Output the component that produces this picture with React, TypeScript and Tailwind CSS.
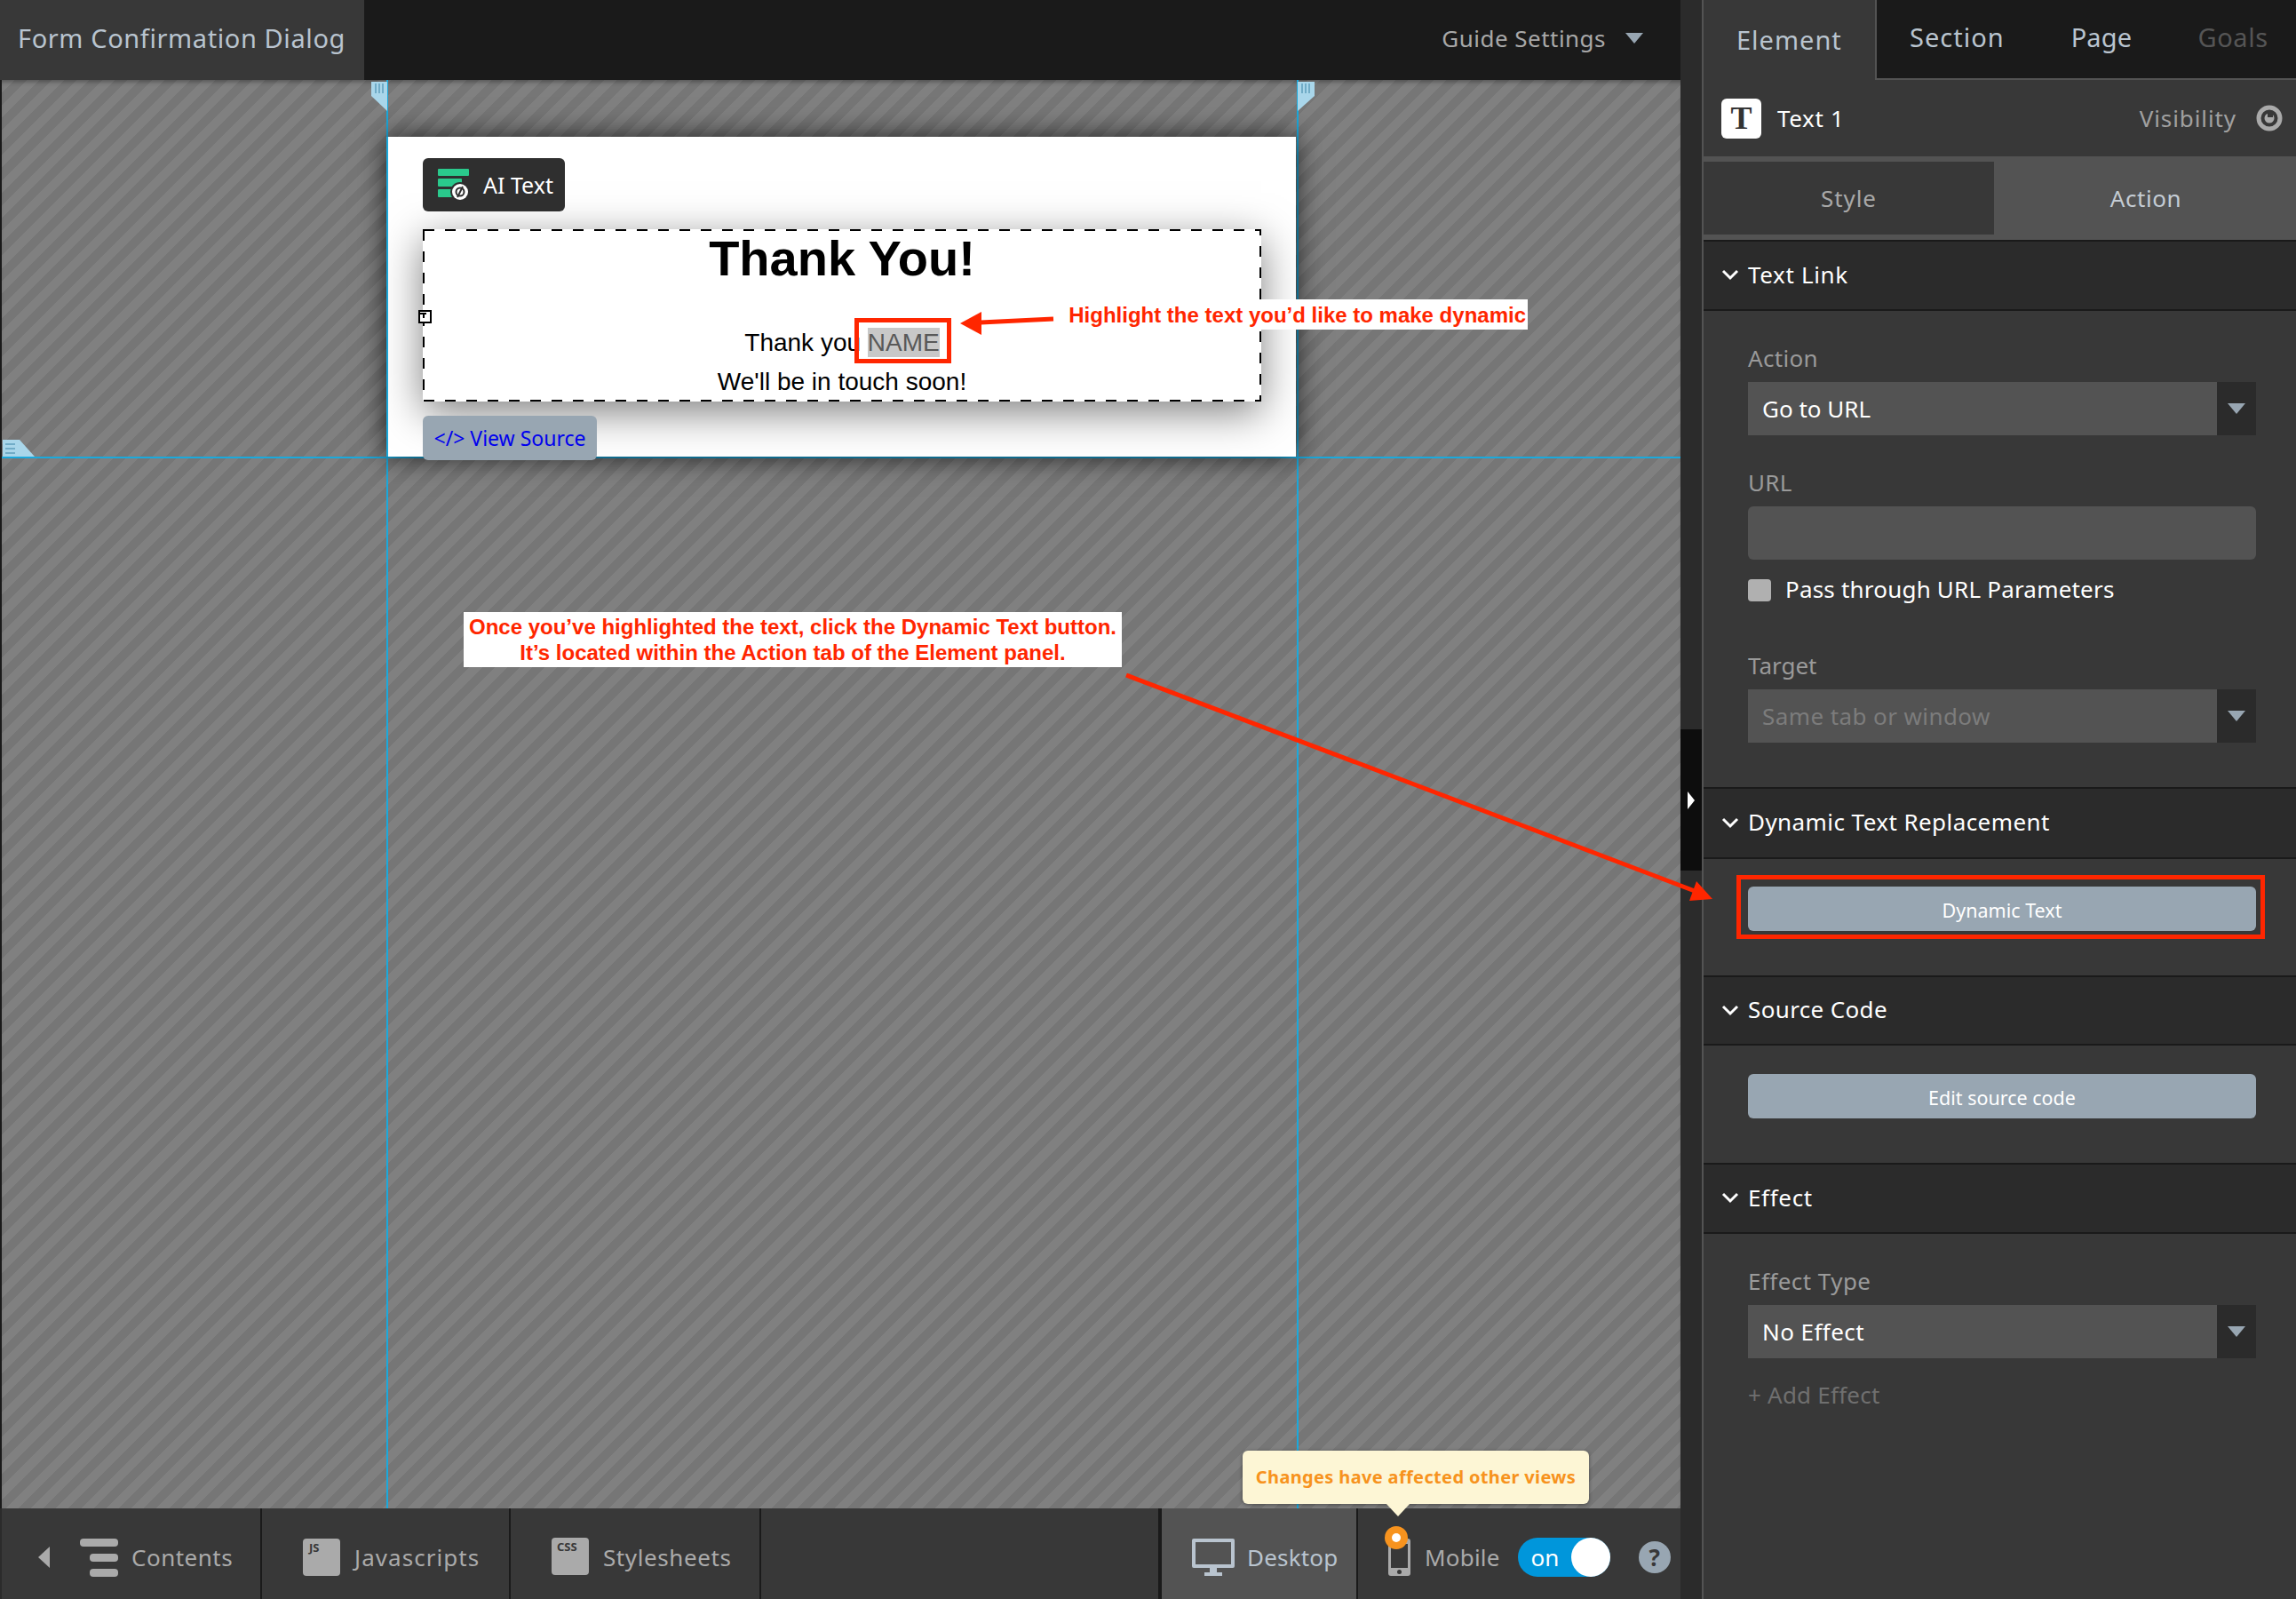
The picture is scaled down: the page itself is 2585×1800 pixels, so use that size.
const sans = "font-['Noto_Sans','Lato',sans-serif]"
const arial = "font-['Liberation_Sans',Arial,sans-serif]"

function Caret({ className = "" }: { className?: string }) {
  return (
    <svg width="20" height="12" viewBox="0 0 20 12" className={className}>
      <path d="M0 0h20L10 12z" fill="#98a6b2" />
    </svg>
  )
}

function Chevron() {
  return (
    <svg width="20" height="14" viewBox="0 0 20 14" className="shrink-0">
      <path d="M2 3l8 8 8-8" fill="none" stroke="#fff" strokeWidth="3" />
    </svg>
  )
}

function Select({ value, dim, tracking = "", className = "" }: { value: string; dim?: boolean; tracking?: string; className?: string }) {
  return (
    <div className={`flex h-[60px] w-[572px] ${className}`}>
      <div className={`flex-1 bg-[#535353] pl-4 flex items-center text-[26px] ${dim ? "text-[#7c7c7c]" : "text-white"} ${tracking}`}>
        {value}
      </div>
      <div className="w-11 bg-[#2b2b2b] flex items-center justify-center">
        <Caret />
      </div>
    </div>
  )
}

function SectionHeader({ title, tracking = "", h = "h-[74px]" }: { title: string; tracking?: string; h?: string }) {
  return (
    <div className={`${h} bg-[#2b2b2b] border-y-2 border-[#1a1a1a] box-content flex items-center pl-[20px] pb-[2px] gap-[10px] text-white text-[26px] ${tracking}`}>
      <Chevron />
      {title}
    </div>
  )
}

function Label({ children, className = "" }: { children: string; className?: string }) {
  return <div className={`text-[26px] leading-[30px] text-[#9a9a9a] ${className}`}>{children}</div>
}

function PanelButton({ children, className = "" }: { children: string; className?: string }) {
  return (
    <div className={`h-[50px] w-[572px] pt-[5px] rounded-md bg-[#98a6b2] flex items-center justify-center text-white text-[21.5px] ${className}`}>
      {children}
    </div>
  )
}

function ElementPanel() {
  return (
    <aside className="flex-1 border-l-2 border-[#535353] bg-[#383838] flex flex-col">
      {/* Tabs */}
      <div className="h-[90px] flex bg-[#1a1a1a] text-[29px]">
        <div className="w-[195px] bg-[#383838] border-r-2 border-[#535353] pl-[37px] pt-[23px] text-[#b9c4cf] tracking-[1px]">Element</div>
        <div className="flex-1 border-b-2 border-[#535353] flex pt-[20px] items-start">
          <span className="ml-[37px] text-[#b9c4cf] tracking-[1px]">Section</span>
          <span className="ml-[75px] text-[#b9c4cf] tracking-[0.2px]">Page</span>
          <span className="ml-[74px] text-[#555] tracking-[0.6px]">Goals</span>
        </div>
      </div>

      {/* Current element */}
      <div className="h-[86px] flex items-center pl-5 pr-[15px]">
        <div className="w-[45px] h-[45px] rounded-md bg-white flex items-center justify-center text-[#333] text-[36px] font-bold font-['Liberation_Serif',serif] leading-none">T</div>
        <span className="ml-[18px] text-white text-[26px] tracking-[0.66px]">Text 1</span>
        <span className="ml-auto text-[#a0a0a0] text-[26px] tracking-[0.9px]">Visibility</span>
        <svg width="30" height="30" viewBox="0 0 30 30" className="ml-[22px]">
          <circle cx="15" cy="15" r="12" fill="none" stroke="#aaa" strokeWidth="5" />
          <circle cx="15" cy="15" r="5.5" fill="#aaa" />
          <path d="M13 8h6v6h-6z" fill="#383838" />
        </svg>
      </div>

      {/* Style / Action */}
      <div className="h-[94px] bg-[#535353] pt-[6px] flex text-[26px]">
        <div className="w-[327px] h-[82px] pt-[1px] bg-[#383838] text-[#a8a8a8] flex items-center justify-center tracking-[0.9px]">Style</div>
        <div className="flex-1 h-[82px] pt-[1px] pl-[2px] text-[#c4ccd4] flex items-center justify-center tracking-[0.6px]">Action</div>
      </div>

      <SectionHeader title="Text Link" tracking="tracking-[0.64px]" />

      <div className="h-[536px] pl-[50px] pt-[38px]">
        <Label className="tracking-[0.33px]">Action</Label>
        <Select value="Go to URL" className="mt-[12px]" />
        <Label className="mt-[38px] tracking-[0.3px]">URL</Label>
        <div className="mt-[12px] h-[60px] w-[572px] rounded-md bg-[#535353]" />
        <div className="mt-[21px] h-[26px] flex items-center">
          <div className="w-[26px] h-[25px] rounded bg-[#b0b0b0]" />
          <span className="ml-4 -mt-[2px] text-white text-[26px] tracking-[0.2px]">Pass through URL Parameters</span>
        </div>
        <Label className="mt-[57px]">Target</Label>
        <Select value="Same tab or window" dim tracking="tracking-[0.41px]" className="mt-[12px]" />
      </div>

      <SectionHeader title="Dynamic Text Replacement" tracking="tracking-[0.43px]" h="h-[75px]" />

      <div className="h-[131px] pl-[50px] pt-[31px] relative">
        <PanelButton>Dynamic Text</PanelButton>
        {/* annotation around the button */}
        <div className="absolute left-[37px] top-[18px] w-[595px] h-[72px] border-[5px] border-[#ff2600]" />
      </div>

      <SectionHeader title="Source Code" tracking="tracking-[0.36px]" h="h-[73px]" />

      <div className="h-[132px] pl-[50px] pt-[32px]">
        <PanelButton>Edit source code</PanelButton>
      </div>

      <SectionHeader title="Effect" tracking="tracking-[0.66px]" h="h-[74px]" />

      <div className="flex-1 pl-[50px] pt-[38px]">
        <Label className="tracking-[0.45px]">Effect Type</Label>
        <Select value="No Effect" tracking="tracking-[0.44px]" className="mt-[12px]" />
        <div className="mt-[22px] text-[26px] text-[#6f6f6f] tracking-[0.22px]">+ Add Effect</div>
      </div>
    </aside>
  )
}

function AiIcon() {
  return (
    <svg width="36" height="36" viewBox="0 0 36 36">
      <rect x="0" y="0" width="35" height="8" rx="1" fill="#2ac98c" />
      <rect x="0" y="11" width="27" height="9" rx="1" fill="#2ac98c" />
      <rect x="0" y="23" width="17" height="9" rx="1" fill="#2ac98c" />
      <circle cx="25" cy="26" r="11" fill="#2f2f2f" />
      <circle cx="25" cy="26" r="9" fill="#fff" />
      <circle cx="25" cy="26" r="4.5" fill="none" stroke="#2f2f2f" strokeWidth="2" />
      <path d="M22 32l6-12" stroke="#2f2f2f" strokeWidth="2" />
    </svg>
  )
}

function PageContent() {
  return (
    <div className="relative mt-[64px] ml-[433px] w-[1022px] h-[360px] bg-white border-l-2 border-[#1ba9dc] shadow-[0_0_30px_rgba(0,0,0,0.75)] box-content">
      <div className="absolute left-[39px] top-[24px] w-[160px] h-[60px] rounded-md bg-[#2f2f2f] flex items-center pl-[17px] z-10">
        <AiIcon />
        <span className="ml-[15px] mt-[2px] text-white text-[25px]">AI Text</span>
      </div>

      <div className={`absolute left-[39px] top-[104px] w-[944px] h-[194px] bg-white shadow-[0_12px_44px_rgba(0,0,0,0.5)] text-black text-center ${arial}`}>
        <svg width="944" height="194" viewBox="0 0 944 194" className="absolute inset-0">
          <rect x="1" y="1" width="942" height="192" fill="none" stroke="#000" strokeWidth="2" strokeDasharray="12 12" />
        </svg>
        <h1 className="relative font-bold text-[56px] leading-[62px] mt-[2px]">Thank You!</h1>
        <p className="relative text-[28px] leading-[44px] mt-[42px]">
          Thank you <span className="text-[#595959] bg-[#c8c8c8] py-[1px]">NAME</span>
        </p>
        <p className="relative text-[28px] leading-[44px]">We'll be in touch soon!</p>
      </div>

      {/* selection handle */}
      <div className="absolute left-[34px] top-[195px] w-[15px] h-[15px] bg-white border-2 border-black">
        <div className="w-[7px] h-[2px] mt-[1px] bg-black" />
        <div className="w-[2px] h-[4px] ml-[3px] bg-black" />
      </div>

      <div className="absolute left-[39px] top-[314px] w-[196px] h-[50px] rounded-md bg-[#98a6b2] flex items-center justify-center text-[#0000ee] text-[23px] z-10">
        &lt;/&gt; View Source
      </div>
    </div>
  )
}

function GuideMarkers() {
  return (
    <>
      <svg width="18" height="34" viewBox="0 0 18 34" className="absolute left-[416px] top-[2px]">
        <path d="M0 0h18v33L0 16z" fill="#a9d6ea" />
        <path d="M5 2v11M9 2v11M13 2v11" stroke="#5f9fbc" strokeWidth="1.5" />
      </svg>
      <svg width="19" height="34" viewBox="0 0 19 34" className="absolute left-[1459px] top-[2px]">
        <path d="M0 0h19v16L0 33z" fill="#a9d6ea" />
        <path d="M5 2v11M9 2v11M13 2v11" stroke="#5f9fbc" strokeWidth="1.5" />
      </svg>
      <svg width="38" height="20" viewBox="0 0 38 20" className="absolute left-[0px] top-[405px]">
        <path d="M1 0h19l17 19H1z" fill="#a9d6ea" />
        <path d="M4 5h11M4 10h11M4 15h11" stroke="#5f9fbc" strokeWidth="1.5" />
      </svg>
    </>
  )
}

function Canvas() {
  return (
    <div className="relative flex-1 overflow-hidden ml-[2px] bg-[repeating-linear-gradient(135deg,#808080_0,#808080_10px,#767676_10px,#767676_20px)] shadow-[inset_0_5px_5px_-3px_rgba(0,0,0,0.35)]">
      <div className="absolute left-[433px] top-0 bottom-0 w-[2px] bg-[#1ba9dc]" />
      <div className="absolute left-[1458px] top-0 bottom-0 w-[2px] bg-[#1ba9dc]" />
      <div className="absolute left-0 right-0 top-[424px] h-[2px] bg-[#1ba9dc]" />
      <PageContent />
      <GuideMarkers />

      {/* Annotation labels */}
      <div className={`absolute left-[1198px] top-[247px] w-[520px] h-[34px] bg-white text-[#ff2600] font-bold text-[24px] leading-[36px] text-right pr-[2px] ${arial}`}>
        Highlight the text you’d like to make dynamic
      </div>
      <div className={`absolute left-[520px] top-[599px] w-[741px] h-[62px] bg-white text-[#ff2600] font-bold text-[24px] leading-[29px] text-center pt-[2px] ${arial}`}>
        Once you’ve highlighted the text, click the Dynamic Text button.
        <br />
        It’s located within the Action tab of the Element panel.
      </div>

      {/* Name highlight box */}
      <div className="absolute left-[960px] top-[268px] w-[109px] h-[51px] border-[5px] border-[#ff2600]" />
      <svg width="120" height="40" viewBox="0 0 120 40" className="absolute left-[1076px] top-[254px]">
        <path d="M108 15L26 19" stroke="#ff2600" strokeWidth="5" fill="none" />
        <path d="M3 20L27 7V33z" fill="#ff2600" />
      </svg>
    </div>
  )
}

function BottomBar() {
  return (
    <div className="h-[102px] bg-[#383838] relative flex text-[26px] text-[#aaa]">
      <div className="w-[291px] border-l-2 border-l-[#2b2b2b] border-r-2 border-r-[#1a1a1a] box-content flex items-center pt-[8px]">
        <svg width="14" height="24" viewBox="0 0 14 24" className="ml-[41px]">
          <path d="M13 0v24L0 12z" fill="#aaa" />
        </svg>
        <div className="ml-[33px] flex flex-col items-end gap-2">
          <div className="w-[43px] h-[9px] rounded bg-[#aaa]" />
          <div className="w-[32px] h-[9px] rounded bg-[#aaa]" />
          <div className="w-[32px] h-[9px] rounded bg-[#aaa]" />
        </div>
        <span className="ml-[15px] mt-[1px] tracking-[0.5px]">Contents</span>
      </div>
      <div className="w-[278px] border-r-2 border-[#1a1a1a] box-content flex items-center pt-[8px]">
        <div className="ml-[46px] w-[42px] h-[42px] rounded bg-[#aaa] text-[#383838] text-[13px] font-bold pl-[7px] leading-[20px]">JS</div>
        <span className="ml-[16px] mt-[1px] tracking-[1.05px]">Javascripts</span>
      </div>
      <div className="w-[280px] border-r-2 border-[#1a1a1a] box-content flex items-center pt-[8px]">
        <div className="ml-[46px] -mt-[3px] w-[42px] h-[42px] rounded bg-[#aaa] text-[#383838] text-[13px] font-bold pl-[6px] leading-[20px]">CSS</div>
        <span className="ml-[16px] mt-[1px] tracking-[0.6px]">Stylesheets</span>
      </div>
      <div className="w-[447px] border-r-4 border-[#1a1a1a] box-content" />
      <div className="w-[219px] border-r-2 border-[#1a1a1a] box-content bg-[#535353] flex items-center pt-[8px] text-[#b9c4cf]">
        <svg width="48" height="42" viewBox="0 0 48 42" className="ml-[34px]">
          <path d="M2 0h44a2 2 0 012 2v29a2 2 0 01-2 2H2a2 2 0 01-2-2V2a2 2 0 012-2zM4 4v25h40V4z" fill="#b9c4cf" fillRule="evenodd" />
          <path d="M20 33h8v5h6v4H14v-4h6z" fill="#b9c4cf" />
        </svg>
        <span className="ml-[14px] mt-[1px] tracking-[0.2px]">Desktop</span>
      </div>
      <div className="flex-1 flex items-center pt-[8px]">
        <div className="relative ml-[34px] w-[25px] h-[42px]">
          <svg width="25" height="42" viewBox="0 0 25 42">
            <path d="M3 0h19a3 3 0 013 3v36a3 3 0 01-3 3H3a3 3 0 01-3-3V3a3 3 0 013-3zM3 6v27h19V6z" fill="#aaa" fillRule="evenodd" />
            <circle cx="12.5" cy="37.5" r="2.5" fill="#383838" />
          </svg>
          <div className="absolute -left-[4px] -top-[14px] w-[26px] h-[26px] rounded-full bg-[#f7931e] flex items-center justify-center">
            <div className="w-[10px] h-[10px] rounded-full bg-white" />
          </div>
        </div>
        <span className="ml-[16px] mt-[1px] tracking-[0.2px]">Mobile</span>
        <div className="ml-[20px] w-[104px] h-[44px] rounded-full bg-[#0096db] flex items-center justify-between pl-[15px] text-white">
          on
          <div className="w-[44px] h-[44px] rounded-full bg-white" />
        </div>
        <div className="ml-[32px] w-9 h-9 rounded-full bg-[#98a6b2] flex items-center justify-center text-[#383838] font-bold text-[26px]">?</div>
      </div>

      {/* Changes tooltip */}
      <div className="absolute left-[1399px] -top-[65px] w-[390px] h-[60px] rounded-md bg-[#fdf6d5] flex items-center justify-center text-[#f7931e] text-[20px] font-bold tracking-[0.35px] shadow-[0_1px_4px_rgba(0,0,0,0.4)]">
        Changes have affected other views
      </div>
      <svg width="28" height="16" viewBox="0 0 28 16" className="absolute left-[1560px] -top-[6px]">
        <path d="M0 0h28L14 15z" fill="#fdf6d5" />
      </svg>
    </div>
  )
}

export default function App() {
  return (
    <div className={`relative w-[2585px] h-[1800px] flex overflow-hidden bg-[#1a1a1a] ${sans}`}>
      <div className="w-[1892px] flex flex-col">
        <div className="h-[90px] bg-[#1a1a1a] flex items-center justify-between pr-[42px] relative z-10">
          <div className="w-[410px] h-full pb-[4px] bg-[#383838] flex items-center pl-5 text-[29px] text-[#b9c4cf] tracking-[0.6px]">Form Confirmation Dialog</div>
          <div className="flex items-center pb-[4px] text-[26px] text-[#a8a8a8] tracking-[0.47px]">
            Guide Settings
            <Caret className="ml-[22px]" />
          </div>
        </div>
        <Canvas />
        <BottomBar />
      </div>
      <div className="w-[24px] bg-[#2b2b2b] relative">
        <div className="absolute left-0 top-[821px] w-full h-[159px] bg-[#0d0d0d] flex items-center justify-center">
          <svg width="8" height="20" viewBox="0 0 8 20"><path d="M0 0l8 10-8 10z" fill="#fff" /></svg>
        </div>
      </div>
      <ElementPanel />

      {/* Arrow from the note to the button */}
      <svg width="2585" height="1800" viewBox="0 0 2585 1800" className="absolute inset-0 pointer-events-none">
        <path d="M1268 760L1908 1003" stroke="#ff2600" strokeWidth="5" fill="none" />
        <path d="M1928 1012L1910 992L1902 1014z" fill="#ff2600" />
      </svg>
    </div>
  )
}
